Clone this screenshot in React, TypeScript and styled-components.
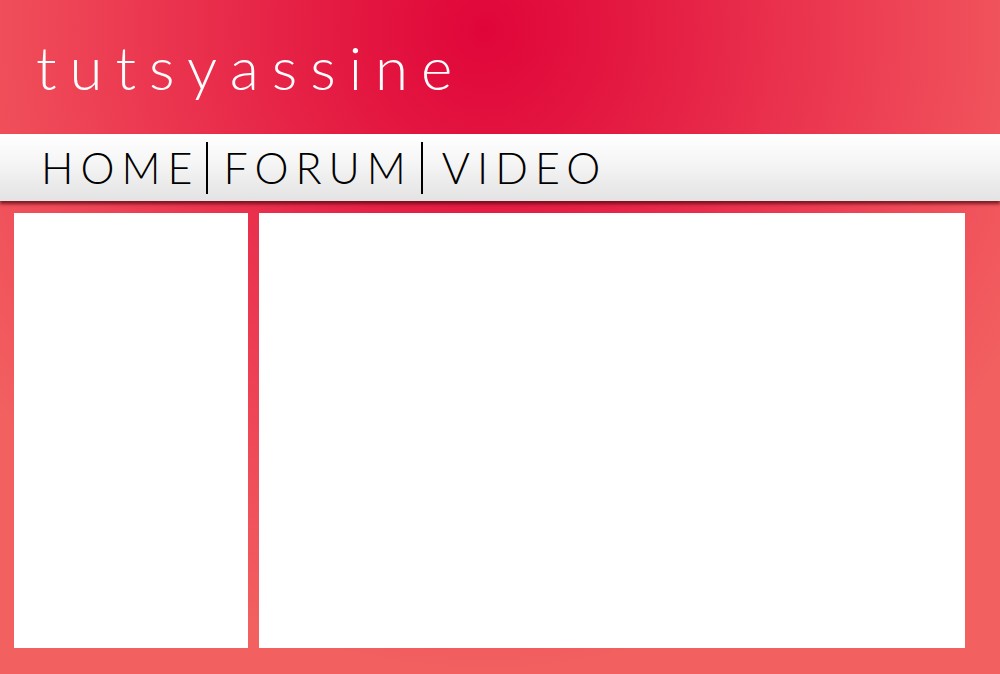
import React from "react";
import styled, { createGlobalStyle } from "styled-components";

const GlobalStyle = createGlobalStyle`
  html, body {
    margin: 0;
    padding: 0;
  }
  body {
    width: 1000px;
    min-height: 674px;
    overflow: hidden;
    background-color: #f26060;
    background-image: radial-gradient(ellipse 600px 640px at 485px 30px, #e00539 0%, #e41a42 25%, #ee4456 70%, #f26060 100%);
    background-repeat: no-repeat;
    font-family: "Lato", "Liberation Sans", sans-serif;
  }
`;

const Page = styled.div`
  display: flex;
  flex-direction: column;
  width: 1000px;
  height: 674px;
`;

const Header = styled.header`
  height: 134px;
  display: flex;
  align-items: flex-start;
  padding-left: 36px;
  box-sizing: border-box;
`;

const Logo = styled.h1`
  margin: 0;
  margin-top: 32px;
  font-family: "Lato", "Liberation Sans", sans-serif;
  font-weight: 300;
  font-size: 60px;
  line-height: 70px;
  letter-spacing: 13px;
  color: #ffffff;
`;

const NavBar = styled.nav`
  height: 67px;
  background: linear-gradient(to bottom, #ffffff 0%, #f6f6f6 40%, #e3e3e3 100%);
  box-shadow: 0 3px 3px rgba(90, 10, 20, 0.75);
  display: flex;
  align-items: center;
  padding-left: 41px;
  box-sizing: border-box;
  position: relative;
  z-index: 1;
`;

const NavItem = styled.a<{ $gapAfter?: number }>`
  font-family: "Lato", "Liberation Sans", sans-serif;
  font-weight: 300;
  font-size: 43px;
  letter-spacing: 7px;
  color: #000000;
  text-decoration: none;
  line-height: 1;
  margin-right: ${(p) => p.$gapAfter ?? 0}px;
`;

const Separator = styled.span<{ $after: number }>`
  display: block;
  width: 2px;
  height: 52px;
  background: #000000;
  margin-right: ${(p) => p.$after}px;
`;

const Content = styled.main`
  flex: 1;
  display: flex;
  gap: 11px;
  padding: 12px 35px 26px 14px;
  box-sizing: border-box;
`;

const Panel = styled.section<{ $width: number }>`
  width: ${(p) => p.$width}px;
  background: #ffffff;
`;

export default function App() {
  return (
    <>
      <GlobalStyle />
      <Page>
        <Header>
          <Logo>tutsyassine</Logo>
        </Header>
        <NavBar>
          <NavItem href="#" $gapAfter={7}>HOME</NavItem>
          <Separator $after={15} />
          <NavItem href="#" $gapAfter={8}>FORUM</NavItem>
          <Separator $after={19} />
          <NavItem href="#">VIDEO</NavItem>
        </NavBar>
        <Content>
          <Panel $width={234} />
          <Panel $width={706} />
        </Content>
      </Page>
    </>
  );
}
